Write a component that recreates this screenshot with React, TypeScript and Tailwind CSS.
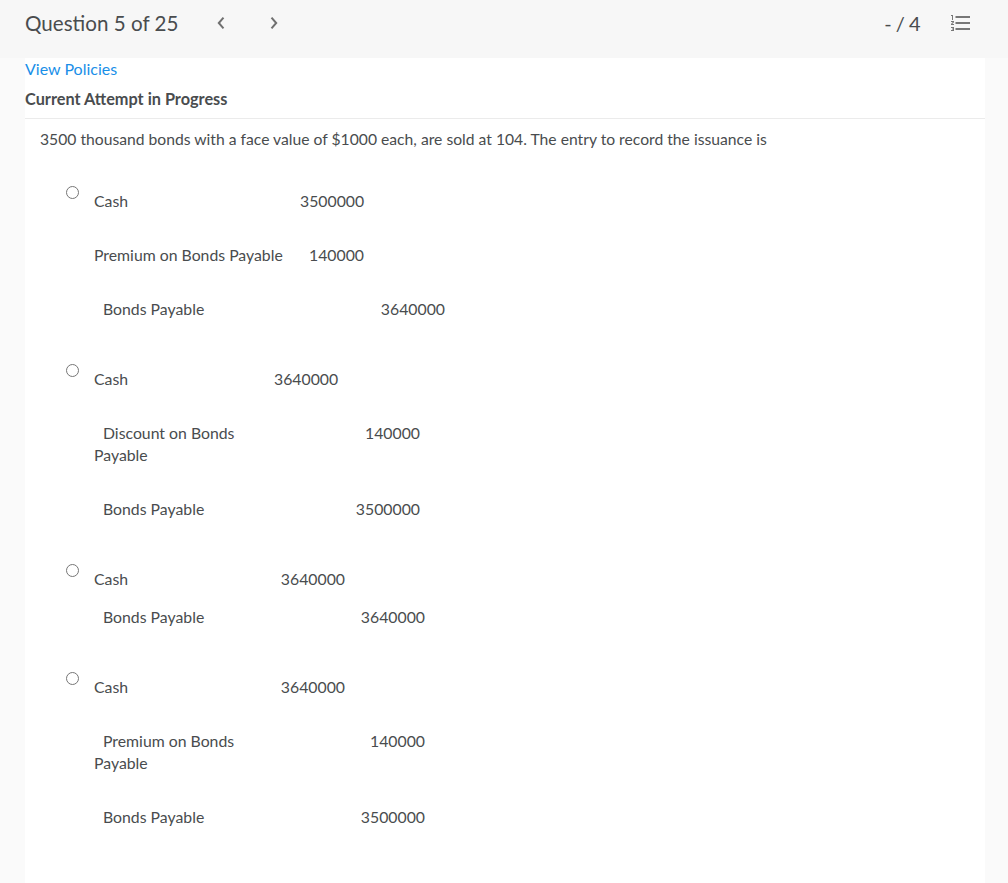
const Row = ({ a, b, c, indent }: { a: string; b?: string; c?: string; indent?: boolean }) => (
  <>
    <div className={indent ? "indent-[9px]" : ""}>{a}</div>
    <div className="text-right">{b}</div>
    <div className="text-right">{c}</div>
  </>
);

const Option = ({ cols, gap, children }: { cols: string; gap: string; children: React.ReactNode }) => (
  <div className="flex mb-[48px]">
    <div className="w-[13px] h-[13px] mt-[-4px] ml-[41px] mr-[15px] rounded-full border border-[#767676] bg-white shrink-0" />
    <div className={`grid ${cols} ${gap}`}>{children}</div>
  </div>
);

export default function App() {
  return (
    <div className="h-[883px] overflow-hidden bg-[#fafafa] text-[#494c4e] text-[15.800px] leading-[22px] font-['Lato',sans-serif]">
      <header className="h-[58px] bg-[#f7f7f7] flex items-center pl-[25px] pr-[38px] pb-[12px]">
        <h1 className="text-[20.600px] leading-[28px] font-normal w-[153px] whitespace-nowrap">Question 5 of 25</h1>
        <svg width="8" height="12" viewBox="0 0 8 12" className="ml-[39px]" fill="none" stroke="#707070" strokeWidth="2">
          <path d="M6.500 .7 1.800 6l4.700 5.300" />
        </svg>
        <svg width="8" height="12" viewBox="0 0 8 12" className="ml-[45px]" fill="none" stroke="#707070" strokeWidth="2">
          <path d="M1.500 .7 6.200 6l-4.700 5.300" />
        </svg>
        <div className="ml-auto text-[20px] leading-[28px] tracking-[-0.5px] mr-[30px]">- / 4</div>
        <svg width="20" height="16" viewBox="0 0 20 16" fill="#777777">
          <path d="M1 0h2v5H2V1H1zM1 6h3v1.200L2.200 9H4v1H1V9l1.800-2H1zM1 12h3v4H1v-1h2v-.6H2v-.8h1V13H1z" />
          <rect x="5.500" y="1" width="14.500" height="2" />
          <rect x="5.500" y="7" width="14.500" height="2" />
          <rect x="5.500" y="13" width="14.500" height="2" />
        </svg>
      </header>
      <main className="mx-[25px] w-[960px] h-[825px] bg-white">
        <a className="block text-[#1a8fe8] text-[16px] leading-[22px] h-[24px]">View Policies</a>
        <div className="h-[37px] pt-[6px] border-b border-[#ebebeb] text-[16.300px] font-bold text-[#494c4e]">Current Attempt in Progress</div>
        <p className="pl-[15px] pt-[9px] text-[15.700px]">3500 thousand bonds with a face value of $1000 each, are sold at 104. The entry to record the issuance is</p>
        <div className="pt-[40px]">
          <Option cols="grid-cols-[206px_64px_81px]" gap="gap-y-[32px]">
            <Row a="Cash" b="3500000" />
            <Row a="Premium on Bonds Payable" b="140000" />
            <Row a="Bonds Payable" c="3640000" indent />
          </Option>
          <Option cols="grid-cols-[180px_64px_82px]" gap="gap-y-[32px]">
            <Row a="Cash" b="3640000" />
            <Row a="Discount on Bonds Payable" c="140000" indent />
            <Row a="Bonds Payable" c="3500000" indent />
          </Option>
          <Option cols="grid-cols-[186px_65px_80px]" gap="gap-y-[16px]">
            <Row a="Cash" b="3640000" />
            <Row a="Bonds Payable" c="3640000" indent />
          </Option>
          <Option cols="grid-cols-[186px_65px_80px]" gap="gap-y-[32px]">
            <Row a="Cash" b="3640000" />
            <Row a="Premium on Bonds Payable" c="140000" indent />
            <Row a="Bonds Payable" c="3500000" indent />
          </Option>
        </div>
      </main>
    </div>
  );
}
